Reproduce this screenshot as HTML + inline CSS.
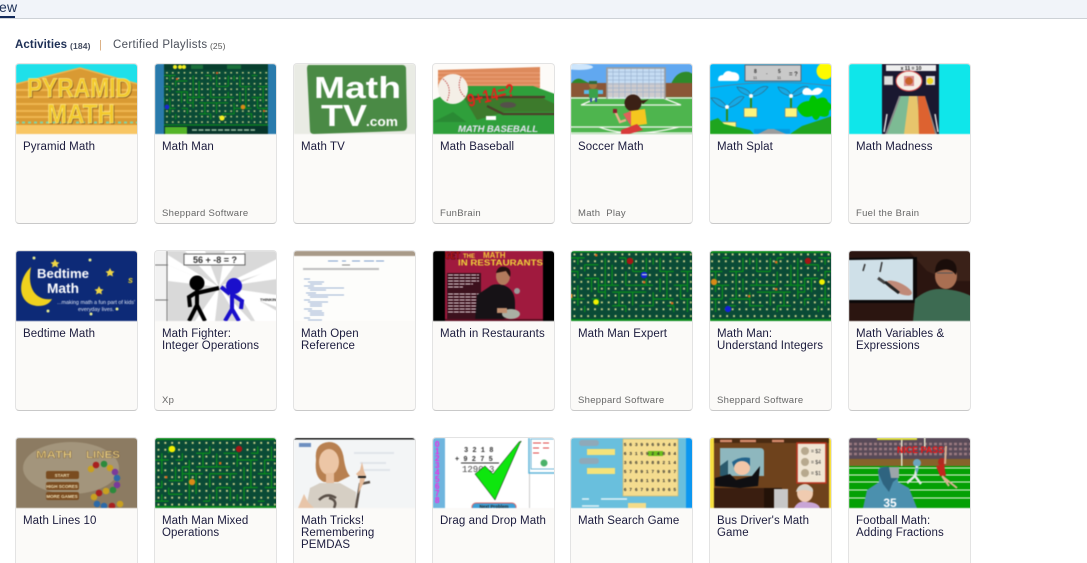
<!DOCTYPE html>
<html lang="en"><head><meta charset="utf-8"><title>Activities</title>
<style>
html,body{margin:0;padding:0;background:#fff;width:1087px;height:563px;overflow:hidden;font-family:"Liberation Sans",sans-serif}
#w{position:relative;width:1087px;height:563px;overflow:hidden;background:#fff}
#top{position:absolute;left:0;top:0;width:1087px;height:18px;background:#f1f4f9;border-bottom:1px solid #cdd1d6}
#tab{position:absolute;left:-1px;top:-1px;font-size:14px;line-height:17px;color:#1d3057;letter-spacing:.2px}
#ul{position:absolute;left:0;top:16px;width:15px;height:2px;background:#12295a}
.h{position:absolute;top:38px;line-height:14px;white-space:nowrap}
.c{position:absolute;width:121px;height:159px;background:#fbfaf8;border:1px solid #e3e3e3;border-bottom:1px solid #c9c9c9;border-radius:4px;overflow:hidden}
.c.r3{height:125px;border-bottom:0;border-radius:4px 4px 0 0}
.c svg{position:absolute;left:0;top:0;width:122px;height:70px;display:block;filter:blur(.4px)}
.t{position:absolute;left:7px;top:77px;width:112px;font-size:11.5px;line-height:12px;color:#1b1b3d;letter-spacing:.1px}
.s{position:absolute;left:7px;top:144px;font-size:9.5px;line-height:12px;color:#666;letter-spacing:.3px;white-space:nowrap}
</style></head><body>
<svg width="0" height="0" style="position:absolute"><defs>
<pattern id="dots" width="6.85" height="6.85" patternUnits="userSpaceOnUse"><rect x="2.5" y="2.5" width="1.9" height="1.9" fill="#d2d68e"/></pattern>
<symbol id="maze" viewBox="0 0 122 70" preserveAspectRatio="none"><rect width="122" height="70" fill="#0a4b36"/><rect width="122" height="70" fill="url(#dots)"/>
<g transform="scale(6.85)"><path d="M0 1H2M1 1V2M0 3H1V4M2 2H4M2 2V3M5 1V7M4 5H7M6 2V5M7 1H8M8 1V2M8 3V5H12M9 1V3M9 3H11M11 3V1M12 1V2M13 1V3H15M14 3V7M15 1H16M15 5H17M16 5V7M17 3V6M16 3H18M2 4H4V6H5M3 4V6M1 5V8M0 7H2M3 7H4V8M2 8V9M6 6H11M7 6V8M9 6V8M10 8H12V6M12 7H15M13 4V6M14 8H15V9M16 7H18M17 7V9M6 8H8M8 8V9M0 5V6M11 4V5" fill="none" stroke="#0b8f1c" stroke-width=".18"/></g></symbol>
</defs></svg>
<div id="w">
<div id="top"><div id="tab">ew</div><div id="ul"></div></div>
<div class="h" style="left:15px;font-size:11.5px;font-weight:bold;color:#1d2f55;letter-spacing:.1px">Activities</div>
<div class="h" style="left:70px;top:39px;font-size:8.5px;font-weight:bold;color:#444c5f;letter-spacing:.15px">(184)</div>
<div class="h" style="left:99px;font-size:11px;color:#d8a878">|</div>
<div class="h" style="left:113px;font-size:11.5px;color:#4a4f5a;letter-spacing:.33px">Certified Playlists</div>
<div class="h" style="left:210px;top:39px;font-size:8.5px;color:#555;letter-spacing:.1px">(25)</div>

<!-- ROW 1 -->
<div class="c" style="left:15px;top:63px"><svg viewBox="0 0 122 70"><rect width="122" height="70" fill="#1fe0e9"/><path d="M0 20L64 4L122 20V70H0Z" fill="#d99a33"/><path d="M0 26H122M0 33H122M0 40H122M0 47H122M0 53H122" stroke="#eeb64f" stroke-width="2"/><path d="M0 20L64 4L122 20" stroke="#eeb64f" stroke-width="1.5" fill="none"/><rect y="61" width="122" height="9" fill="#f8c664"/><path d="M0 58.500H122" stroke="#7fd4a8" stroke-width="2" stroke-dasharray="3 3"/><text x="12" y="34" font-family="Liberation Sans" font-weight="bold" font-size="27" textLength="105" lengthAdjust="spacingAndGlyphs" fill="#8a5a10">PYRAMID</text><text x="11" y="33" font-family="Liberation Sans" font-weight="bold" font-size="27" textLength="105" lengthAdjust="spacingAndGlyphs" fill="#f3c92b" stroke="#fff3a0" stroke-width=".5">PYRAMID</text><text x="32" y="60" font-family="Liberation Sans" font-weight="bold" font-size="27" textLength="68" lengthAdjust="spacingAndGlyphs" fill="#8a5a10">MATH</text><text x="31" y="59" font-family="Liberation Sans" font-weight="bold" font-size="27" textLength="68" lengthAdjust="spacingAndGlyphs" fill="#f3c92b" stroke="#fff3a0" stroke-width=".5">MATH</text></svg><div class="t">Pyramid Math</div></div>

<div class="c" style="left:154px;top:63px"><svg viewBox="0 0 122 70"><rect width="122" height="70" fill="#2a7bac"/><rect x="9" y="0" width="104" height="70" fill="#0a4b36"/><use href="#maze" x="9" y="6" width="104" height="56"/><path d="M9 61H113" stroke="#0b8a1b" stroke-width="1"/><rect x="9" y="0" width="104" height="6" fill="#083f2e"/><circle cx="20" cy="3" r="2" fill="#f5ee20"/><circle cx="25" cy="3" r="2" fill="#f5ee20"/><circle cx="29" cy="3" r="2" fill="#f5ee20"/><rect x="36" y="1" width="12" height="4" fill="#1a6f3a"/><rect x="72" y="1" width="14" height="4" fill="#1a6f3a"/><rect x="9" y="62" width="104" height="8" fill="#07352a"/><rect x="10" y="63" width="22" height="7" fill="#54b428"/><path d="M37 66H100" stroke="#9fc4a8" stroke-width="1.500" stroke-dasharray="5 1.500"/><circle cx="67" cy="54" r="2.600" fill="#f5ee20"/><circle cx="12" cy="43" r="2.400" fill="#1b26d0"/><circle cx="88" cy="43" r="2.400" fill="#d98a17"/><rect x="61" y="8" width="2" height="2" fill="#e05a20"/><rect x="21" y="14" width="2" height="2" fill="#e05a20"/><rect x="108" y="46" width="2" height="2" fill="#e05a20"/></svg><div class="t">Math Man</div><div class="s">Sheppard Software</div></div>

<div class="c" style="left:293px;top:63px"><svg viewBox="0 0 122 70"><rect width="122" height="70" fill="#e9ebe4"/><path d="M15 1H108Q112 1 112 5L113 62Q113 67 108 67L20 70Q16 70 16 66L13 5Q13 1 15 1Z" fill="#4a8a45"/><text x="20" y="34" font-family="Liberation Sans" font-weight="bold" font-size="31" textLength="87" lengthAdjust="spacingAndGlyphs" fill="#fff">Math</text><text x="27" y="62" font-family="Liberation Sans" font-weight="bold" font-size="31" textLength="46" lengthAdjust="spacingAndGlyphs" fill="#fff">TV</text><text x="72" y="62" font-family="Liberation Sans" font-weight="bold" font-size="13" textLength="32" lengthAdjust="spacingAndGlyphs" fill="#fff">.com</text></svg><div class="t">Math TV</div></div>

<div class="c" style="left:432px;top:63px"><svg viewBox="0 0 122 70"><rect width="122" height="70" fill="#fdfbf8"/><path d="M5 6L107 3V24H5Z" fill="#dd8a5c"/><path d="M5 9H107M5 13H107M5 17H107M5 21H107" stroke="#ec9f75" stroke-width="1"/><path d="M0 36L30 22H100L122 30V70H0Z" fill="#2f9f3b"/><path d="M30 32H105L122 40V48H72L44 56Z" fill="#3d7a2c"/><path d="M36 33H112M122 50H70L54 42" stroke="#4d3f2a" stroke-width="2.200" fill="none"/><path d="M0 58L20 48L36 60H0Z" fill="#2a8a34"/><circle cx="20" cy="25" r="15" fill="#f4efe7"/><path d="M10 15Q20 23 14 37M28 13Q23 25 32 33" stroke="#c0504d" stroke-width="1" stroke-dasharray="1.500 1" fill="none"/><ellipse cx="75" cy="41" rx="8" ry="3" fill="#55504a"/><rect x="53" y="52" width="10" height="4" fill="#fff"/><text x="36" y="43" font-family="Liberation Sans" font-weight="bold" font-size="18" textLength="48" lengthAdjust="spacingAndGlyphs" fill="#e3241c" transform="rotate(-14 36 43)">9+14=?</text><rect y="58" width="122" height="12" fill="#2f9f3b"/><text x="25" y="68" font-family="Liberation Sans" font-weight="bold" font-style="italic" font-size="9.500" textLength="80" fill="#e8e4f4">MATH BASEBALL</text></svg><div class="t">Math Baseball</div><div class="s">FunBrain</div></div>

<div class="c" style="left:570px;top:63px"><svg viewBox="0 0 122 70"><rect width="122" height="70" fill="#61a8f0"/><ellipse cx="8" cy="3" rx="14" ry="3" fill="#cfe6fb"/><path d="M0 20Q5 12 12 16T24 20V22H0ZM100 20Q106 6 118 8L122 10V22H100Z" fill="#2e8a2a"/><rect y="19" width="122" height="14" fill="#8a5636"/><rect y="33" width="122" height="37" fill="#4eb54e"/><path d="M0 34H122M10 41H110M10 41L24 35M92 34L110 41M0 63H122M28 63Q60 75 108 63M0 69H122" stroke="#f2f6ee" stroke-width="1.300" fill="none"/><rect x="36" y="4" width="58" height="31" fill="#dfe9f4" opacity=".8"/><path d="M36 8H94M36 12H94M36 16H94M36 20H94M36 24H94M36 28H94M42 4V34M48 4V34M54 4V34M60 4V34M66 4V34M72 4V34M78 4V34M84 4V34M90 4V34" stroke="#8ea8c8" stroke-width=".5"/><path d="M36 35V4H94V35" stroke="#9b9b9b" stroke-width="1.600" fill="none"/><circle cx="22" cy="21" r="4" fill="#a9743c"/><path d="M18 17H26V20H18Z" fill="#2f6b3c"/><rect x="18" y="25" width="9" height="9" fill="#3aa14a"/><rect x="13" y="26" width="5" height="4" fill="#5bb8e6"/><rect x="27" y="26" width="5" height="4" fill="#5bb8e6"/><path d="M20 34V38M25 34V38" stroke="#2e4f9a" stroke-width="2"/><circle cx="62" cy="39" r="8.500" fill="#3b2015"/><path d="M68 36Q74 37 78 35L72 40Z" fill="#3b2015"/><path d="M58 47L74 45L76 60L60 62Z" fill="#f5c71f"/><path d="M52 50L60 47L60 62Z" fill="#e0605a"/><path d="M50 66L66 60L72 66L58 70H50Z" fill="#d83a3a"/><path d="M44 47L49 58L55 56" stroke="#e8b08a" stroke-width="2.400" fill="none"/><rect x="42" y="45" width="4" height="4" fill="#8a1a2a"/></svg><div class="t">Soccer Math</div><div class="s">Math &nbsp;Play</div></div>

<div class="c" style="left:709px;top:63px"><svg viewBox="0 0 122 70"><rect width="122" height="70" fill="#00b4f6"/><rect x="35" y="1" width="56" height="16" fill="#c9c9c9" stroke="#5a6a7a"/><text x="44" y="9" font-family="Liberation Sans" font-weight="bold" font-size="5" fill="#333">8</text><text x="43" y="15" font-family="Liberation Sans" font-size="4" fill="#333">11</text><text x="56" y="11" font-size="5" font-family="Liberation Sans" fill="#333">-</text><text x="68" y="9" font-family="Liberation Sans" font-weight="bold" font-size="5" fill="#333">5</text><text x="67" y="15" font-family="Liberation Sans" font-size="4" fill="#333">11</text><text x="79" y="12" font-family="Liberation Sans" font-weight="bold" font-size="6" fill="#333">= ?</text><circle cx="115" cy="7" r="8.500" fill="#fdfa00"/><path d="M8 16Q8 11 13 11Q16 5 22 8Q28 8 29 12Q30 16 27 17H10Q8 17 8 16Z" fill="#fff"/><path d="M0 24Q60 14 122 22" stroke="#5a7a95" stroke-width=".7" fill="none"/><path d="M1 34Q10 33 17 43Q28 30 34 33Q28 42 17 44Q8 44 1 34ZM27 23Q38 24 41 31Q52 20 58 23Q50 33 41 32Q30 30 27 23ZM68 23Q78 24 81 31Q92 20 98 23Q90 33 81 32Q70 30 68 23Z" fill="#14aae8" stroke="#2f6f8a" stroke-width=".7"/><path d="M17 43V57M41 32V44M81 32V44" stroke="#2e8a1e" stroke-width="2"/><circle cx="17" cy="43" r="2" fill="#fff"/><circle cx="41" cy="32" r="2" fill="#fff"/><circle cx="81" cy="32" r="2" fill="#fff"/><rect x="11" y="58" width="15" height="10" fill="#fdf57d" stroke="#777" stroke-width=".6"/><rect x="34" y="44" width="13" height="9" fill="#fdf57d" stroke="#777" stroke-width=".6"/><rect x="75" y="44" width="12" height="9" fill="#fdf57d" stroke="#777" stroke-width=".6"/><path d="M93 26Q97 21 102 27Q107 21 113 26Q111 31 105 31H95Q91 30 93 26Z" fill="#fff"/><path d="M87 44Q91 37 99 37Q102 27 107 35Q116 31 118 38Q125 42 119 47Q120 55 110 52Q106 60 102 52Q92 56 87 44Z" fill="#00c400"/><path d="M0 70V57L8 54L14 60L22 62L40 66L44 70ZM80 70L92 62L110 56L122 52V70Z" fill="#1fa51f"/><rect x="44" y="65" width="36" height="5" fill="#0c8fd4" opacity=".7"/><path d="M48 70L58 65H64L76 70Z" fill="#9c9c9c"/></svg><div class="t">Math Splat</div></div>

<div class="c" style="left:848px;top:63px"><svg viewBox="0 0 122 70"><rect width="122" height="70" fill="#0fe6ea"/><rect x="33" width="57" height="70" fill="#1a1830"/><path d="M36 70L50 32H76L88 70Z" fill="#888"/><path d="M38 70L52 32H61V70Z" fill="#7dbb94"/><path d="M55 70L60 32H68L72 70Z" fill="#e7c56c"/><path d="M70 70L69 32H76L86 70Z" fill="#dd6230"/><rect x="37" y="1" width="50" height="6" fill="#eee"/><text x="62" y="6" text-anchor="middle" font-family="Liberation Sans" font-weight="bold" font-size="5" fill="#222">x 11 = 10</text><ellipse cx="60" cy="17" rx="13" ry="10" fill="#f5efe6" stroke="#d04040"/><rect x="55" y="12" width="10" height="10" fill="#d98a8a"/><circle cx="60" cy="17" r="3.800" fill="#c7622a"/><rect x="35" y="12" width="9" height="9" fill="#ddd" stroke="#555" stroke-width=".5"/><rect x="77" y="12" width="9" height="9" fill="#ddd"/><circle cx="81" cy="17" r="3.200" fill="#f0d820"/><path d="M38 50L35 68M86 50L89 68" stroke="#ddd" stroke-width="1.500"/></svg><div class="t">Math Madness</div><div class="s">Fuel the Brain</div></div>

<!-- ROW 2 -->
<div class="c" style="left:15px;top:250px"><svg viewBox="0 0 122 70"><rect width="122" height="70" fill="#0d2a77"/><path d="M15 16C0 30 2 54 22 55C30 55 34 52 36 48C24 50 10 42 15 16Z" fill="#f0d11e"/><text x="21" y="27" font-family="Liberation Sans" font-weight="bold" font-size="13" textLength="52" lengthAdjust="spacingAndGlyphs" fill="#fff">Bedtime</text><text x="31" y="42" font-family="Liberation Sans" font-weight="bold" font-size="14" textLength="32" lengthAdjust="spacingAndGlyphs" fill="#fff">Math</text><text x="41" y="53" font-family="Liberation Sans" font-size="5.200" textLength="78" lengthAdjust="spacingAndGlyphs" fill="#dfe6f2">...making math a fun part of kids'</text><text x="62" y="60" font-family="Liberation Sans" font-size="5.200" textLength="36" lengthAdjust="spacingAndGlyphs" fill="#dfe6f2">everyday lives.</text><text x="112" y="32" font-family="Liberation Sans" font-weight="bold" font-style="italic" font-size="9" fill="#e8d22a">s</text><path d="M39 8l1.500 3 3 .5-2.200 2 .7 3-3-1.500-3 1.500.7-3-2.200-2 3-.5zM94 17l1.500 3 3 .5-2.200 2 .7 3-3-1.500-3 1.500.7-3-2.200-2 3-.5zM83 35l1.500 3 3 .5-2.200 2 .7 3-3-1.500-3 1.500.7-3-2.200-2 3-.5z" fill="#eed545"/><circle cx="18" cy="7" r="1.500" fill="#e8ee90"/><circle cx="74" cy="9" r="1.500" fill="#e8ee90"/><circle cx="32" cy="60" r="1.500" fill="#e8ee90"/><circle cx="101" cy="58" r="1.500" fill="#e8ee90"/><circle cx="75" cy="63" r="1.500" fill="#e8ee90"/></svg><div class="t">Bedtime Math</div></div>

<div class="c" style="left:154px;top:250px"><svg viewBox="0 0 122 70"><rect width="122" height="70" fill="#fff"/><path d="M13 0H122V16L80 34L122 28V60L80 36L100 70H60L64 36L40 70H13ZM64 36L13 14V30Z" fill="#d9d9d9"/><path d="M64 36L13 4V14ZM64 36L30 0H50ZM64 36L70 0H90ZM64 36L122 8V18ZM64 36L122 44V56ZM64 36L84 70H96Z" fill="#fff"/><rect width="13" height="70" fill="#f2f2f2"/><path d="M0 14H13M0 49H13M12 0V70" stroke="#777" stroke-width="1"/><rect x="29" y="3" width="61" height="11" fill="#fff" stroke="#666"/><text x="60" y="12" text-anchor="middle" font-family="Liberation Sans" font-weight="bold" font-size="9" fill="#333">56 + -8 = ?</text><text x="105" y="50" font-family="Liberation Sans" font-weight="bold" font-size="4" fill="#222">THINKING</text><circle cx="42" cy="32" r="7.500" fill="#000"/><path d="M42 38V54M42 42L64 37M42 41L34 46L35 56M42 54L34 70M42 54L50 70" stroke="#000" stroke-width="4" fill="none"/><circle cx="79" cy="35" r="8" fill="#1a0fcc"/><path d="M77 42L77 58M75 43L66 36M78 44L87 50L86 58M77 58L70 70M77 58L84 70" stroke="#1a0fcc" stroke-width="4" fill="none"/></svg><div class="t">Math Fighter:<br>Integer Operations</div><div class="s">Xp</div></div>

<div class="c" style="left:293px;top:250px"><svg viewBox="0 0 122 70"><rect width="122" height="70" fill="#fdfdfb"/><rect width="122" height="5" fill="#a89a88"/><path d="M34 10H44M48 10H52M58 10H66M70 10H80M82 10H90" stroke="#7ea0cc" stroke-width="1"/><rect x="9" y="17" width="76" height="2" fill="#bdbdbd"/><path d="M48 14H56" stroke="#888"/><path d="M10 28H16M14 31H30M16 33H28M10 35H20M14 37H50M16 39H32M12 42H22M14 44H50M16 46H34M10 49H16M14 51H34M16 53H28M16 55H28M10 58H18M14 60H28M16 62H30M16 64H30M10 67H16M14 69H28" stroke="#7f9cc8" stroke-width=".7"/></svg><div class="t">Math Open<br>Reference</div></div>

<div class="c" style="left:432px;top:250px"><svg viewBox="0 0 122 70"><rect width="122" height="70" fill="#000"/><rect x="12" width="98" height="70" fill="#a01a3e"/><text x="12" y="8" font-family="Liberation Sans" font-weight="bold" font-size="10" textLength="15" lengthAdjust="spacingAndGlyphs" fill="#ff1a1a" stroke="#000" stroke-width=".4">GET</text><text x="30" y="7" font-family="Liberation Sans" font-weight="bold" font-size="6" fill="#f3d73a">THE</text><text x="50" y="7" font-family="Liberation Sans" font-weight="bold" font-size="8" fill="#f3c63a">MATH</text><text x="25" y="14.500" font-family="Liberation Sans" font-weight="bold" font-size="8" textLength="85" lengthAdjust="spacingAndGlyphs" fill="#f0d33a">IN RESTAURANTS</text><rect x="14" y="22" width="34" height="46" fill="#2a1118" opacity=".85"/><path d="M15 24H46M15 27H46M15 30H46M15 33H40M15 36H30M15 43H46M15 46H46M15 49H46M15 52H46M15 55H46M15 58H46M15 61H46" stroke="#e9dbe0" stroke-width=".9" stroke-dasharray="5 .8"/><path d="M42 70L44 44L56 36Q60 32 70 34Q82 38 82 52L82 66L58 70Z" fill="#161216"/><ellipse cx="70" cy="25" rx="7" ry="9" fill="#b27a5c"/><path d="M63 22Q65 14 73 16Q79 18 77 26L73 20Z" fill="#23110f"/><circle cx="84" cy="40" r="3" fill="#9a9a9a"/><ellipse cx="78" cy="63" rx="9" ry="5" fill="#aab0a4"/><rect x="64" y="57" width="10" height="5" fill="#c08f6f"/><rect x="12" y="68" width="98" height="2" fill="#5a0d20"/></svg><div class="t">Math in Restaurants</div></div>

<div class="c" style="left:570px;top:250px"><svg viewBox="0 0 122 70"><use href="#maze" width="122" height="70"/><rect y="61" width="122" height="9" fill="#0a4b36"/><rect y="61" width="122" height="7" fill="url(#dots)"/><rect y="68" width="122" height="2" fill="#0b8a1b"/><rect y="0" width="122" height="1.500" fill="#0b8a1b"/><circle cx="59" cy="10" r="3.300" fill="#a51515"/><circle cx="73" cy="24" r="3.300" fill="#1420d8"/><rect x="71" y="23" width="5" height="1.200" fill="#cdd"/><circle cx="25" cy="51" r="2.800" fill="#f2f200"/><rect x="24" y="3" width="2.400" height="2.400" fill="#df6a1d"/><rect x="72" y="30" width="2.400" height="2.400" fill="#df6a1d"/><rect x="100" y="51" width="2.400" height="2.400" fill="#df6a1d"/><rect x="0" y="43" width="1.500" height="4" fill="#df8a1d"/></svg><div class="t">Math Man Expert</div><div class="s">Sheppard Software</div></div>

<div class="c" style="left:709px;top:250px"><svg viewBox="0 0 122 70"><use href="#maze" width="122" height="70" transform="matrix(-1 0 0 1 122 0)"/><rect y="61" width="122" height="9" fill="#0a4b36"/><rect y="61" width="122" height="7" fill="url(#dots)"/><rect y="68" width="122" height="2" fill="#0b8a1b"/><rect y="0" width="122" height="2" fill="#0b8a1b"/><circle cx="98" cy="10" r="3.200" fill="#a51515"/><circle cx="4" cy="31" r="3.200" fill="#d98a17"/><circle cx="18" cy="58" r="3.200" fill="#1420d8"/><circle cx="112" cy="31" r="2.900" fill="#f2f200"/><rect x="65" y="10" width="2.400" height="2.400" fill="#df6a1d"/><rect x="65" y="37" width="2.400" height="2.400" fill="#df6a1d"/><rect x="38" y="44" width="2.400" height="2.400" fill="#df6a1d"/></svg><div class="t">Math Man:<br>Understand Integers</div><div class="s">Sheppard Software</div></div>

<div class="c" style="left:848px;top:250px"><svg viewBox="0 0 122 70"><rect width="122" height="70" fill="#2b1510"/><path d="M60 0H122V30H100L78 20Z" fill="#3a2118"/><path d="M0 7L68 6L68 52H0Z" fill="#0a0808"/><path d="M0 9L64 8L64 49L0 49Z" fill="#cfe0e8"/><path d="M16 13L14 20M33 11L31 21" stroke="#333" stroke-width="1.500"/><path d="M29 27L36 32" stroke="#444" stroke-width="3"/><ellipse cx="50" cy="37" rx="14" ry="5" fill="#c08a78" transform="rotate(25 50 37)"/><path d="M36 31L50 42" stroke="#222" stroke-width="3"/><path d="M64 70L66 48Q78 38 90 38Q108 38 122 45V70Z" fill="#3d6b52"/><ellipse cx="97" cy="25" rx="11" ry="13" fill="#a96f52"/><path d="M86 22Q86 8 98 8Q110 10 107 24Q100 14 86 22Z" fill="#1a0d0a"/><path d="M88 22H104" stroke="#555" stroke-width="1"/></svg><div class="t">Math Variables &amp;<br>Expressions</div></div>

<!-- ROW 3 -->
<div class="c r3" style="left:15px;top:437px"><svg viewBox="0 0 122 70"><rect width="122" height="70" fill="#8c7b62"/><ellipse cx="55" cy="30" rx="48" ry="26" fill="#a3957c"/><text x="20" y="20" font-family="Liberation Sans" font-weight="bold" font-size="10" textLength="36" lengthAdjust="spacingAndGlyphs" fill="#efd68a" stroke="#5a3a1a" stroke-width=".3">MATH</text><text x="70" y="20" font-family="Liberation Sans" font-weight="bold" font-size="10" textLength="34" lengthAdjust="spacingAndGlyphs" fill="#efd68a" stroke="#5a3a1a" stroke-width=".3">LINES</text><rect x="30" y="33" width="33" height="8" rx="2" fill="#7a4c20"/><rect x="30" y="44" width="33" height="8" rx="2" fill="#7a4c20"/><rect x="30" y="54" width="33" height="8" rx="2" fill="#7a4c20"/><text x="46" y="39" text-anchor="middle" font-family="Liberation Sans" font-weight="bold" font-size="4.500" fill="#eee0b8">START</text><text x="46" y="50" text-anchor="middle" font-family="Liberation Sans" font-weight="bold" font-size="4.500" fill="#eee0b8">HIGH SCORES</text><text x="46" y="60" text-anchor="middle" font-family="Liberation Sans" font-weight="bold" font-size="4.500" fill="#eee0b8">MORE GAMES</text><circle cx="75" cy="31" r="3.300" fill="#c8a020"/><circle cx="80" cy="27" r="3.300" fill="#a8201f"/><circle cx="88" cy="26" r="3.300" fill="#2c8a3c"/><circle cx="94" cy="30" r="3.300" fill="#c8a020"/><circle cx="99" cy="34" r="3.300" fill="#7a3a9a"/><circle cx="101" cy="40" r="3.300" fill="#2c6aa8"/><circle cx="101" cy="47" r="3.300" fill="#7a3a9a"/><circle cx="97" cy="52" r="3.300" fill="#2c8a3c"/><circle cx="90" cy="53" r="3.300" fill="#c8a020"/><circle cx="83" cy="55" r="3.300" fill="#a8201f"/><circle cx="78" cy="59" r="3.300" fill="#c8a020"/><circle cx="81" cy="66" r="3.300" fill="#2c6aa8"/><circle cx="88" cy="68" r="3.300" fill="#2c6aa8"/><circle cx="96" cy="68" r="3.300" fill="#a8201f"/><circle cx="104" cy="66" r="3.300" fill="#c8a020"/></svg><div class="t">Math Lines 10</div></div>

<div class="c r3" style="left:154px;top:437px"><svg viewBox="0 0 122 70"><use href="#maze" width="122" height="70" transform="matrix(1 0 0 -1 0 70)"/><rect y="0" width="122" height="2" fill="#0b8a1b"/><rect y="68" width="122" height="2" fill="#0b8a1b"/><circle cx="17" cy="11" r="3.300" fill="#f2ee00"/><circle cx="84" cy="11" r="3.200" fill="#a51515"/><circle cx="37" cy="44" r="3.200" fill="#d98a17"/><rect x="64" y="24" width="2.400" height="2.400" fill="#df6a1d"/><rect x="64" y="38" width="2.400" height="2.400" fill="#df6a1d"/><rect x="10" y="38" width="2.400" height="2.400" fill="#df6a1d"/></svg><div class="t">Math Man Mixed<br>Operations</div></div>

<div class="c r3" style="left:293px;top:437px"><svg viewBox="0 0 122 70"><rect width="122" height="70" fill="#f3f5f6"/><rect width="122" height="1.500" fill="#111"/><rect x="5" y="5" width="12" height="4" fill="#6d8fc0"/><path d="M60 15H100M66 25H92M70 32H96" stroke="#e0e4ea" stroke-width="2"/><path d="M12 70L16 50L26 45H46L62 54V70Z" fill="#d6cfc4"/><path d="M22 22Q20 5 35 4Q48 4 50 22Q52 34 56 38L44 44L30 44Q20 40 22 22Z" fill="#b88050"/><ellipse cx="35" cy="24" rx="10" ry="13" fill="#ecc6a6"/><rect x="32" y="35" width="8" height="10" fill="#e6bc9a"/><path d="M25 62Q33 54 42 60M35 60Q44 62 40 70M62 70L66 46L76 44" stroke="#5a5048" stroke-width="2.500" fill="none"/><path d="M64 56L66 40L62 36L66 32L68 24L70 33L72 38L70 44Z" fill="#e5bb9a"/><path d="M64 39H72" stroke="#222" stroke-width="2"/><path d="M4 70L10 56L14 64L20 70Z" fill="#e8c5a8"/></svg><div class="t">Math Tricks!<br>Remembering<br>PEMDAS</div></div>

<div class="c r3" style="left:432px;top:437px"><svg viewBox="0 0 122 70"><rect width="122" height="70" fill="#fff"/><rect width="12" height="70" fill="#6fb5de"/><text x="2" y="9" font-family="Liberation Sans" font-weight="bold" font-size="8" fill="#f525e8">0</text><text x="2" y="16" font-family="Liberation Sans" font-weight="bold" font-size="8" fill="#f525e8">1</text><text x="2" y="23" font-family="Liberation Sans" font-weight="bold" font-size="8" fill="#f525e8">2</text><text x="2" y="30" font-family="Liberation Sans" font-weight="bold" font-size="8" fill="#f525e8">3</text><text x="2" y="37" font-family="Liberation Sans" font-weight="bold" font-size="8" fill="#f525e8">4</text><text x="2" y="44" font-family="Liberation Sans" font-weight="bold" font-size="8" fill="#f525e8">5</text><text x="2" y="51" font-family="Liberation Sans" font-weight="bold" font-size="8" fill="#f525e8">6</text><text x="2" y="58" font-family="Liberation Sans" font-weight="bold" font-size="8" fill="#f525e8">7</text><text x="2" y="65" font-family="Liberation Sans" font-weight="bold" font-size="8" fill="#f525e8">8</text><text x="31" y="14" font-family="Liberation Mono" font-weight="bold" font-size="7" fill="#333">3 2 1 8</text><text x="22" y="23" font-family="Liberation Mono" font-weight="bold" font-size="7" fill="#333">+ 9 2 7 5</text><path d="M28 25H66" stroke="#333"/><text x="29" y="34" font-family="Liberation Mono" font-size="9" fill="#444">1290 3</text><path d="M42 36L62 62L87 5Q90 2 86 4L60 36L52 28Z" fill="#0ee60e" stroke="#111" stroke-width=".5"/><rect x="96" y="35" width="1" height="35" fill="#ccc"/><path d="M96 0V35H122" stroke="#5fb5d9" stroke-width="1.500" fill="none"/><rect x="98" y="1" width="24" height="30" fill="#fff" stroke="#70b8d8"/><path d="M100 5H108M110 5H116M100 10H106M110 10H116M100 15H106" stroke="#d44" stroke-width="1"/><circle cx="111" cy="25" r="3.500" fill="#49b269"/><rect x="39" y="65" width="44" height="8" rx="4" fill="#3e9fd6" stroke="#d86a6a"/><text x="61" y="70" text-anchor="middle" font-family="Liberation Sans" font-weight="bold" font-size="4.500" fill="#222">Next Problem</text></svg><div class="t">Drag and Drop Math</div></div>

<div class="c r3" style="left:570px;top:437px"><svg viewBox="0 0 122 70"><rect width="122" height="70" fill="#0c97f0"/><rect x="0" width="115" height="70" fill="#69bfdd"/><rect x="8" y="2" width="20" height="6" rx="3" fill="#8fa9b9"/><rect x="8" y="20" width="20" height="6" rx="3" fill="#8fa9b9"/><rect x="16" y="11" width="28" height="6" fill="#f5e37a"/><rect x="16" y="30" width="28" height="6" fill="#f5e37a"/><rect x="52" y="1" width="55" height="57" fill="#f4dc8f" stroke="#d6b566" stroke-width=".6"/><rect x="77" y="13" width="15" height="5" fill="#6dc01c"/><text x="79" y="8" text-anchor="middle" font-family="Liberation Mono" font-weight="bold" font-size="4.600" fill="#2a2a2a">5 6 3 9 9 6 9 0 4 8</text><text x="79" y="17" text-anchor="middle" font-family="Liberation Mono" font-weight="bold" font-size="4.600" fill="#2a2a2a">6 3 1 5 9 2 4 8 8 4</text><text x="79" y="26" text-anchor="middle" font-family="Liberation Mono" font-weight="bold" font-size="4.600" fill="#2a2a2a">3 6 6 3 0 8 8 2 1 4</text><text x="79" y="35" text-anchor="middle" font-family="Liberation Mono" font-weight="bold" font-size="4.600" fill="#2a2a2a">5 7 8 9 1 7 9 9 8 7</text><text x="79" y="44" text-anchor="middle" font-family="Liberation Mono" font-weight="bold" font-size="4.600" fill="#2a2a2a">3 6 4 8 1 9 9 1 9 0</text><text x="79" y="53" text-anchor="middle" font-family="Liberation Mono" font-weight="bold" font-size="4.600" fill="#2a2a2a">6 7 6 7 9 8 3 0 6 5</text><path d="M11 61H18M30 61H56M11 68H28M58 67H74" stroke="#e4f3f8" stroke-width="1.500"/><rect x="57" y="65" width="18" height="5" fill="#f3dc8a"/></svg><div class="t">Math Search Game</div></div>

<div class="c r3" style="left:709px;top:437px"><svg viewBox="0 0 122 70"><rect width="122" height="70" fill="#f8e040"/><rect x="4" width="115" height="70" fill="#6e421c"/><rect x="4" width="115" height="5" fill="#4a2b12"/><path d="M10 3H22M30 3H46M62 3H74" stroke="#d68a6c" stroke-width="2.500"/><path d="M10 10H50Q54 10 54 14V38H10Z" fill="#8eb7be"/><path d="M10 28L18 22V38H10Z" fill="#2b5a6c"/><rect x="87" y="5" width="29" height="40" fill="#f0e6d4" stroke="#b8331d" stroke-width="1.500"/><circle cx="95" cy="13" r="4" fill="#b7a98e"/><circle cx="95" cy="24" r="4" fill="#b7a98e"/><circle cx="95" cy="35" r="4" fill="#b7a98e"/><text x="101" y="15" font-family="Liberation Sans" font-size="5" fill="#333">= $2</text><text x="101" y="26" font-family="Liberation Sans" font-size="5" fill="#333">= $4</text><text x="101" y="37" font-family="Liberation Sans" font-size="5" fill="#333">= $1</text><path d="M22 24Q30 18 40 20V28L24 30Z" fill="#23638b"/><ellipse cx="32" cy="30" rx="8" ry="7" fill="#f2c6a8"/><path d="M5 40L20 36L26 42L42 38L50 28L48 48L30 50L5 48Z" fill="#0f0f12"/><rect x="4" y="50" width="50" height="20" fill="#3a1e10"/><path d="M54 50H72V70H54Z" fill="#231208"/><rect x="64" y="51" width="14" height="19" fill="#c7c7c7"/><ellipse cx="95" cy="55" rx="8" ry="9" fill="#f0cbb0"/><path d="M86 54Q88 45 97 47Q104 49 103 54Q94 50 86 54Z" fill="#d6d2c8"/><path d="M84 70Q88 62 96 64Q108 64 110 70Z" fill="#c8a5d6"/></svg><div class="t">Bus Driver's Math<br>Game</div></div>

<div class="c r3" style="left:848px;top:437px"><svg viewBox="0 0 122 70"><rect width="122" height="70" fill="#04a004"/><rect width="122" height="21" fill="#584a58"/><path d="M0 6H122M0 11H122M0 16H122" stroke="#9a7a80" stroke-width="2.500" stroke-dasharray="3 2"/><rect y="21" width="122" height="7" fill="#86632a"/><path d="M0 30H122M0 37H122M0 44H122M0 52H122M0 60H122" stroke="#e6f5e0" stroke-width="1"/><rect x="52" y="0" width="1.500" height="28" fill="#e2e2c8"/><rect x="75" y="0" width="1.500" height="10" fill="#e2e2c8"/><rect x="28" y="0" width="40" height="2" fill="#d7d73a"/><text x="48" y="15" font-family="Liberation Sans" font-weight="bold" font-size="9" textLength="50" lengthAdjust="spacingAndGlyphs" fill="#ee1414">NICE PASS!</text><path d="M14 70L18 52Q24 48 30 44L29 32Q30 28 40 29Q50 29 49 44L60 50L68 70Z" fill="#4b90ae"/><path d="M29 34Q30 28 40 29Q50 29 49 40L44 44L40 54L34 46Z" fill="#2f6480"/><path d="M40 29H50V40H42Z" fill="#9ca5aa"/><text x="41" y="69" text-anchor="middle" font-family="Liberation Sans" font-weight="bold" font-size="12" fill="#fff">35</text><circle cx="68" cy="25" r="4" fill="#6ba6bf"/><path d="M68 28L66 38L58 45M66 38L72 46" stroke="#e0e8e4" stroke-width="2.500" fill="none"/><path d="M66 30L70 30L68 37Z" fill="#6ba6bf"/><circle cx="93" cy="24" r="4" fill="#b02a20"/><path d="M87 28L95 26L97 38L91 38Z" fill="#c2261c"/><path d="M93 38L100 48M93 38L108 50M96 26L97 8" stroke="#d8b090" stroke-width="2" fill="none"/></svg><div class="t">Football Math:<br>Adding Fractions</div></div>
</div>
</body></html>
